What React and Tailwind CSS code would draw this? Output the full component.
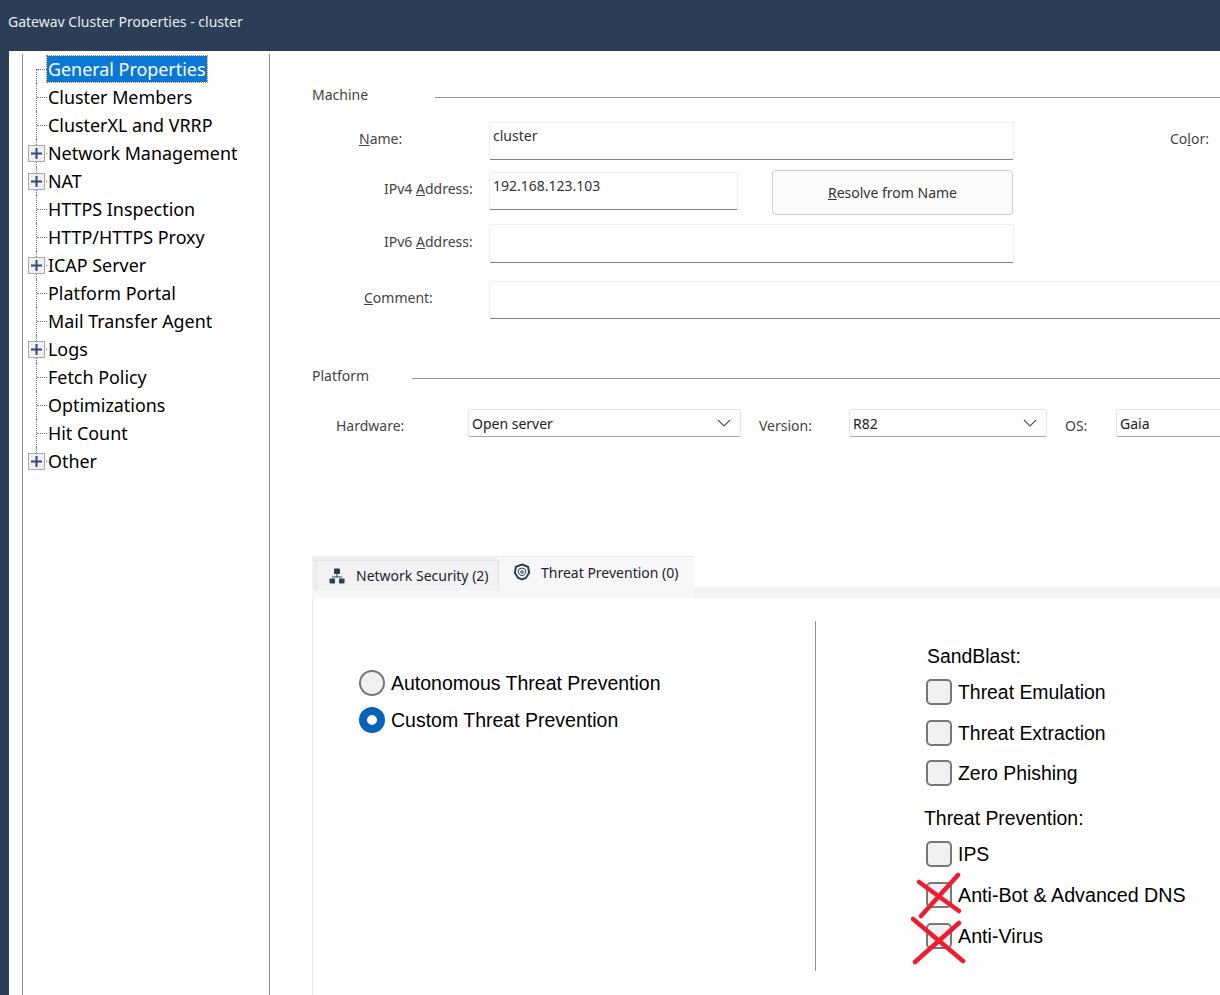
const segoe = "font-['Noto_Sans',sans-serif]";
const arial = "font-['Liberation_Sans',sans-serif]";

const treeItems = [
  ["General Properties", false, true],
  ["Cluster Members", false],
  ["ClusterXL and VRRP", false],
  ["Network Management", true],
  ["NAT", true],
  ["HTTPS Inspection", false],
  ["HTTP/HTTPS Proxy", false],
  ["ICAP Server", true],
  ["Platform Portal", false],
  ["Mail Transfer Agent", false],
  ["Logs", true],
  ["Fetch Policy", false],
  ["Optimizations", false],
  ["Hit Count", false],
  ["Other", true],
];

function TreeRow({ label, expand, selected, first, last }) {
  const vertical = first
    ? "top-[14px] bottom-0"
    : last
      ? "top-0 h-[14px]"
      : "top-0 bottom-0";
  return (
    <div className="relative flex h-7 items-center pl-[25px]">
      <div className={"absolute left-[13px] border-l border-dotted border-[#777] " + vertical} />
      <div className="absolute left-[14px] top-[14px] w-[10px] border-t border-dotted border-[#777]" />
      {expand && (
        <div className="absolute left-[5px] top-[6px] flex h-[17px] w-[17px] items-center justify-center border border-[#aaa] bg-[#f0f0f0]">
          <svg width="13" height="13" viewBox="0 0 13 13"><path d="M6.500 1v11M1 6.500h11" stroke="#34477a" strokeWidth="2" /></svg>
        </div>
      )}
      <span className={"text-[17.9px] leading-[26px] whitespace-nowrap " + (selected ? "-ml-[1px] bg-[#0a78d7] pl-[1px] pr-[1px] text-white outline-1 outline-dotted outline-[#d07a10]" : "text-black")}>{label}</span>
    </div>
  );
}

function Input({ className, value }) {
  return (
    <div className={"border border-[#eeeeee] border-b-[#808080] bg-white rounded-[2px] pl-[3px] text-[14px] leading-[26px] text-[#333] " + className}>{value}</div>
  );
}

function Label({ className, children }) {
  return <span className={"shrink-0 text-[14px] text-[#444] whitespace-nowrap " + className}>{children}</span>;
}

function Select({ className, value, chevron = true }) {
  return (
    <div className={"flex h-[28px] shrink-0 items-center justify-between rounded-[2px] border border-[#e4e4e4] border-b-[#aaa] bg-[#fdfdfd] pl-[3px] pr-[9px] text-[14px] text-[#222] " + className}>
      <span>{value}</span>
      {chevron && <svg width="14" height="8" viewBox="0 0 14 8"><path d="M1 1l6 6 6-6" fill="none" stroke="#555" strokeWidth="1.100" /></svg>}
    </div>
  );
}

function Section({ title, titleWidth, className }) {
  return (
    <div className={"flex items-start " + className}>
      <span className={"shrink-0 pt-px text-[14px] text-[#444] leading-5 " + titleWidth}>{title}</span>
      <div className="mt-[13px] h-px flex-1 bg-[#999]" />
    </div>
  );
}

function Check({ label, className, textClass = "text-[19.4px]" }) {
  return (
    <div className={"flex h-[26px] items-center " + className}>
      <div className="h-[26px] w-[26px] shrink-0 rounded-[5px] border-2 border-[#777] bg-[#f1f1f1]" />
      <span className={"ml-[6px] pt-[2px] text-black whitespace-nowrap " + textClass + " " + arial}>{label}</span>
    </div>
  );
}

export default function App() {
  return (
    <div className={"flex h-[995px] w-[1220px] flex-col overflow-hidden bg-[#2c3e55] " + segoe}>
      <div className="h-[51px] shrink-0 pl-2 pt-[12px]">
        <div className="h-[15px] overflow-hidden text-[14px] leading-[20px] text-[#e8ebef]">Gateway Cluster Properties - cluster</div>
      </div>
      <div className="ml-[9px] flex min-h-0 flex-1 overflow-hidden bg-white">
        <div className="ml-[13px] mt-[3px] w-[248px] shrink-0 border-x border-[#8c8c8c] pt-px">
          {treeItems.map(([l, e, s], i) => (
            <TreeRow key={l} label={l} expand={e} selected={s} first={i === 0} last={i === treeItems.length - 1} />
          ))}
        </div>
        <div className="relative min-w-0 flex-1 overflow-hidden pl-[42px]">
          <Section title="Machine" titleWidth="w-[123px]" className="mt-[33px]" />

          <div className="mt-[17px] flex h-[38px] items-center">
            <Label className="ml-[47px] w-[130px] -mt-[6px]"><u>N</u>ame:</Label>
            <Input className="h-[38px] w-[525px] shrink-0" value="cluster" />
            <Label className="ml-[156px] -mt-[6px]">Co<u>l</u>or:</Label>
          </div>

          <div className="mt-[11px] flex items-start">
            <Label className="ml-[72px] w-[105px] mt-[7px]">IPv4 <u>A</u>ddress:</Label>
            <Input className="mt-px h-[38px] w-[249px] shrink-0" value="192.168.123.103" />
            <button className="ml-[34px] -mt-[1px] h-[45px] w-[241px] shrink-0 rounded-[4px] border border-[#cccccc] bg-[#fcfcfc] text-[14px] text-[#333]"><u>R</u>esolve from Name</button>
          </div>

          <div className="mt-[9px] flex items-start">
            <Label className="ml-[72px] w-[105px] mt-[7px]">IPv6 <u>A</u>ddress:</Label>
            <Input className="h-[39px] w-[525px] shrink-0" />
          </div>

          <div className="mt-[18px] flex items-start">
            <Label className="ml-[52px] w-[125px] mt-[6px]"><u>C</u>omment:</Label>
            <Input className="h-[38px] w-[800px] shrink-0" />
          </div>

          <Section title="Platform" titleWidth="w-[100px]" className="mt-[46px]" />

          <div className="mt-[23px] flex items-center">
            <Label className="ml-[24px] w-[132px] mt-[5px]">Hardware:</Label>
            <Select className="w-[273px]" value="Open server" />
            <Label className="ml-[18px] w-[90px] mt-[5px]">Version:</Label>
            <Select className="w-[198px]" value="R82" />
            <Label className="ml-[18px] w-[51px] mt-[5px]">OS:</Label>
            <Select className="w-[200px]" value="Gaia" chevron={false} />
          </div>

          <div className="mt-[119px] flex h-[42px]">
            <div className="flex h-[42px] w-[187px] shrink-0 flex-col bg-[#f0f0f0] pt-[4px]">
              <div className="ml-[4px] flex h-[30px] w-[183px] items-center border border-b-0 border-[#e2e2e2] bg-[#f3f3f3] pl-[12px] text-[14px] text-[#223]">
                <svg width="16" height="16" viewBox="0 0 16 16" fill="#2c3e55"><rect x="5" y="0.500" width="6" height="5.500" rx="1" /><rect x="7.500" y="6" width="1" height="3" /><rect x="3" y="8.500" width="10" height="1" /><rect x="0.500" y="10.500" width="5.500" height="5" rx="0.700" /><rect x="10" y="10.500" width="5.500" height="5" rx="0.700" /></svg>
                <span className="ml-[11px] whitespace-nowrap">Network Security (2)</span>
              </div>
              <div className="h-[8px] bg-[#f7f7f7]" />
            </div>
            <div className="flex h-[42px] w-[195px] shrink-0 items-start border-t border-[#e6e6e6] bg-[#f7f7f7] pl-[14px] pt-[5px] text-[14px] text-[#223]">
              <svg className="mt-[1px]" width="18" height="18" viewBox="0 0 18 18" fill="none" stroke="#2c3e55"><path d="M9 1.500l6 2.200 1.200 6L12.800 15 9 16.500 5.200 15 1.800 9.700 3 3.700z" strokeWidth="2" /><path d="M9 5l3.200 1.200.6 3-1.800 2.700L9 12.800l-2-.9-1.800-2.700.6-3z" strokeWidth="1" /><circle cx="9" cy="9" r="1.300" strokeWidth="1" /></svg>
              <span className="ml-[10px] whitespace-nowrap">Threat Prevention (0)</span>
            </div>
            <div className="mt-[31px] h-[11px] flex-1 bg-[#f3f3f3]" />
          </div>

          <div className="flex h-[400px] border-l border-[#e4e4e4] bg-white">
            <div className={"w-[502px] shrink-0 pl-[46px] pt-[72px] text-[19.5px] text-black " + arial}>
              <div className="flex h-[26px] items-center">
                <div className="h-[26px] w-[26px] rounded-full border-2 border-[#777] bg-[#f1f1f1]" />
                <span className="ml-[6px] pt-[2px] whitespace-nowrap">Autonomous Threat Prevention</span>
              </div>
              <div className="mt-[11px] flex h-[26px] items-center">
                <div className="h-[26px] w-[26px] rounded-full border-[8px] border-[#0563b8] bg-white" />
                <span className="ml-[6px] pt-[2px] whitespace-nowrap">Custom Threat Prevention</span>
              </div>
            </div>
            <div className="mt-[23px] h-[350px] w-px bg-[#8c8c8c]" />
            <div className={"relative pl-[110px] pt-[44px] " + arial}>
              <div className="ml-px text-[19.4px] leading-[28px] text-black">SandBlast:</div>
              <Check className="mt-[9px]" label="Threat Emulation" />
              <Check className="mt-[15px]" label="Threat Extraction" />
              <Check className="mt-[14px]" label="Zero Phishing" />
              <div className="-ml-[2px] mt-[18px] text-[19.4px] leading-[28px] text-black">Threat Prevention:</div>
              <Check className="mt-[9px]" label="IPS" />
              <Check className="mt-[15px]" label="Anti-Bot &amp; Advanced DNS" textClass="text-[19.7px]" />
              <Check className="mt-[15px]" label="Anti-Virus" textClass="text-[19.7px]" />
              <svg className="pointer-events-none absolute left-[100px] top-[270px] h-[52px] w-[50px]" viewBox="0 0 50 52" fill="none">
                <path d="M3 14L43 43M42 7L5 48" stroke="#ee1c2e" strokeWidth="4.500" strokeLinecap="round" />
              </svg>
              <svg className="pointer-events-none absolute left-[95px] top-[315px] h-[52px] w-[56px]" viewBox="0 0 56 52" fill="none">
                <path d="M2 6L52 48M48 10L4 49" stroke="#ee1c2e" strokeWidth="4.500" strokeLinecap="round" />
              </svg>
            </div>
          </div>
        </div>
      </div>
    </div>
  );
}
